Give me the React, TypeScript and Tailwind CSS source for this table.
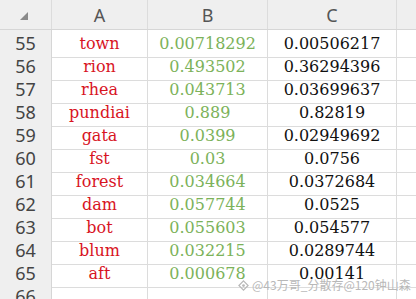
import React from "react";

const rows: [number, string, string, string][] = [
  [55, "town", "0.00718292", "0.00506217"],
  [56, "rion", "0.493502", "0.36294396"],
  [57, "rhea", "0.043713", "0.03699637"],
  [58, "pundiai", "0.889", "0.82819"],
  [59, "gata", "0.0399", "0.02949692"],
  [60, "fst", "0.03", "0.0756"],
  [61, "forest", "0.034664", "0.0372684"],
  [62, "dam", "0.057744", "0.0525"],
  [63, "bot", "0.055603", "0.054577"],
  [64, "blum", "0.032215", "0.0289744"],
  [65, "aft", "0.000678", "0.00141"],
  [66, "", "", ""],
];

const cols = "grid grid-cols-[52px_96px_120px_129px_1fr]";
const sans = { fontFamily: '"Noto Sans", "Liberation Sans", sans-serif' };
const serif = { fontFamily: '"DejaVu Serif", "Liberation Serif", serif' };

export default function App() {
  return (
    <div className="relative w-[416px] h-[299px] overflow-hidden bg-white">
      <div className={`${cols} h-[30px] bg-[#efefef] border-b border-[#d6d6d6]`}>
        <div className="flex items-center justify-center border-r border-[#dcdcdc]">
          <svg width="10" height="10" viewBox="0 0 10 10" className="mt-[2px] ml-[-4px]">
            <polygon points="9,1 9,9 1,9" fill="#8a8a8a" />
          </svg>
        </div>
        {["A", "B", "C", ""].map((c, i) => (
          <div
            key={i}
            className={`flex items-center justify-center text-[18px] text-[#555] pt-[2px] ${i < 3 ? "border-r border-[#dcdcdc]" : ""}`}
            style={sans}
          >
            {c}
          </div>
        ))}
      </div>
      {rows.map(([n, a, b, c]) => (
        <div key={n} className={`${cols} h-[23px]`}>
          <div
            className="flex items-center justify-center bg-[#efefef] border-r border-b border-[#d6d6d6] text-[18px] text-[#444]"
            style={sans}
          >
            {n}
          </div>
          <div
            className="flex items-center justify-center border-r border-b border-[#dcdcdc] text-[16px] text-[#d8141f]"
            style={serif}
          >
            {a}
          </div>
          <div
            className="flex items-center justify-center border-r border-b border-[#dcdcdc] text-[16px] text-[#7cb25a]"
            style={serif}
          >
            {b}
          </div>
          <div
            className="flex items-center justify-center border-r border-b border-[#dcdcdc] text-[16px] text-[#111]"
            style={serif}
          >
            {c}
          </div>
          <div className="border-b border-[#dcdcdc]" />
        </div>
      ))}
      <div
        className="absolute left-[238px] top-[276px] flex items-center gap-[3px] whitespace-nowrap text-[12px] text-[#b8b8b8]"
        style={{ fontFamily: '"Noto Sans CJK SC", "Noto Sans", sans-serif', textShadow: "0 0 2px rgba(255,255,255,0.9)" }}
      >
        <svg width="11" height="11" viewBox="0 0 12 12">
          <path d="M6 1 L11 6 L6 11 L1 6 Z" fill="none" stroke="#b8b8b8" strokeWidth="1.3" />
          <circle cx="6" cy="6" r="1.5" fill="#b8b8b8" />
        </svg>
        <span>@43万哥_分散存@120钟山森</span>
      </div>
    </div>
  );
}
